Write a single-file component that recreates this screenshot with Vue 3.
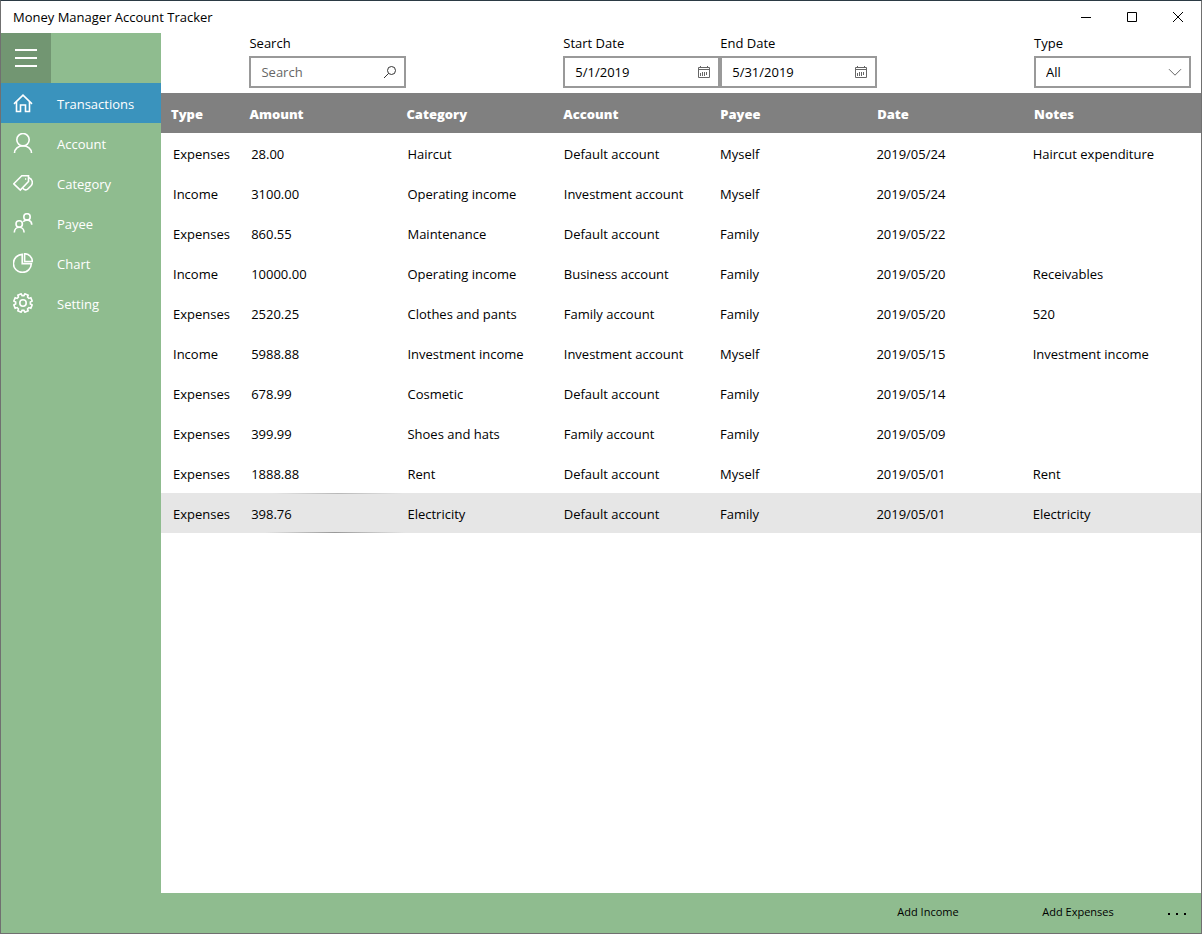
<script setup>
import { ref } from 'vue'

const navItems = [
  { id: 'transactions', label: 'Transactions' },
  { id: 'account', label: 'Account' },
  { id: 'category', label: 'Category' },
  { id: 'payee', label: 'Payee' },
  { id: 'chart', label: 'Chart' },
  { id: 'setting', label: 'Setting' }
]

const gearTeeth = 8
const gearPath = (() => {
  const points = []
  const step = (Math.PI * 2) / gearTeeth
  const profile = [
    [-0.34, 7.4],
    [-0.24, 9.4],
    [0.24, 9.4],
    [0.34, 7.4]
  ]
  for (let i = 0; i < gearTeeth; i++) {
    for (const [offset, radius] of profile) {
      const angle = i * step + step / 2 + offset * step
      points.push(`${(10 + radius * Math.cos(angle)).toFixed(2)} ${(10 + radius * Math.sin(angle)).toFixed(2)}`)
    }
  }
  return `M${points.join('L')}Z`
})()

const icons = {
  transactions: ['M1 10.8 10 2.2l9 8.600', 'M3.500 9v9.500h4V12h5v6.500h4V9'],
  account: ['M10 .5a6.200 6.200 0 1 1 0 12.400A6.200 6.200 0 0 1 10 .5Z', 'M1.500 20a8.500 7.200 0 0 1 17 0'],
  category: [
    'M.8 10.800 8.800 2.700h6.700v5.800l-8.200 8.500Z',
    'M12 6h1.200',
    'M15.500 4.600c2.500 1 4 3 3.800 5.400-.1 1.200-.6 2-1.500 3l-3 3c-1.200 1.200-3.400 1.400-5-.9'
  ],
  payee: [
    'M6.200 7.800a3.200 3.200 0 1 1 0 6.400 3.200 3.200 0 0 1 0-6.400Z',
    'M1.300 19.500c.2-7 9.600-7 9.800 0',
    'M14 .7a3.200 3.200 0 1 1 0 6.400 3.200 3.200 0 0 1 0-6.400Z',
    'M10.200 8.800c3-3.200 8.400-1.600 8.600 2.900'
  ],
  chart: ['M9.200 1.400a9 9 0 1 0 9.200 9.200H9.200Z', 'M11.600.7V8.500h7.700A7.700 7.800 0 0 0 11.600.7Z'],
  setting: [gearPath, 'M10 6.800a3.200 3.200 0 1 1 0 6.400 3.200 3.200 0 0 1 0-6.400Z']
}

const columns = ['Type', 'Amount', 'Category', 'Account', 'Payee', 'Date', 'Notes']

const rows = [
  ['Expenses', '28.00', 'Haircut', 'Default account', 'Myself', '2019/05/24', 'Haircut expenditure'],
  ['Income', '3100.00', 'Operating income', 'Investment account', 'Myself', '2019/05/24', ''],
  ['Expenses', '860.55', 'Maintenance', 'Default account', 'Family', '2019/05/22', ''],
  ['Income', '10000.00', 'Operating income', 'Business account', 'Family', '2019/05/20', 'Receivables'],
  ['Expenses', '2520.25', 'Clothes and pants', 'Family account', 'Family', '2019/05/20', '520'],
  ['Income', '5988.88', 'Investment income', 'Investment account', 'Myself', '2019/05/15', 'Investment income'],
  ['Expenses', '678.99', 'Cosmetic', 'Default account', 'Family', '2019/05/14', ''],
  ['Expenses', '399.99', 'Shoes and hats', 'Family account', 'Family', '2019/05/09', ''],
  ['Expenses', '1888.88', 'Rent', 'Default account', 'Myself', '2019/05/01', 'Rent'],
  ['Expenses', '398.76', 'Electricity', 'Default account', 'Family', '2019/05/01', 'Electricity']
]

const activeNav = ref('transactions')
const highlighted = ref(9)
const search = ref('')
const startDate = ref('5/1/2019')
const endDate = ref('5/31/2019')
const type = ref('All')
</script>

<template>
  <div class="window">
    <header class="titlebar">
      <span class="title">Money Manager Account Tracker</span>
      <div class="controls">
        <button type="button" aria-label="Minimize">
          <svg viewBox="0 0 12 12"><path d="M1 6.500h10" /></svg>
        </button>
        <button type="button" aria-label="Maximize">
          <svg viewBox="0 0 12 12"><path d="M1.500 1.500h9v9h-9Z" /></svg>
        </button>
        <button type="button" aria-label="Close">
          <svg viewBox="0 0 12 12"><path d="m1 1 10 10M11 1 1 11" /></svg>
        </button>
      </div>
    </header>

    <div class="body">
      <aside class="sidebar">
        <button type="button" class="hamburger" aria-label="Toggle menu">
          <span></span><span></span><span></span>
        </button>
        <nav>
          <a
            v-for="item in navItems"
            :key="item.id"
            href="#"
            class="nav-item"
            :class="{ active: activeNav === item.id }"
            @click.prevent="activeNav = item.id"
          >
            <svg class="nav-icon" viewBox="0 0 20 20">
              <path v-for="d in icons[item.id]" :key="d" :d="d" />
            </svg>
            <span class="nav-label">{{ item.label }}</span>
          </a>
        </nav>
      </aside>

      <main class="content">
        <form class="filters" @submit.prevent>
          <div class="field search">
            <label for="search">Search</label>
            <div class="box">
              <input id="search" v-model="search" type="text" placeholder="Search" />
              <button type="submit" aria-label="Run search">
                <svg class="glyph dark" viewBox="0 0 14 14"><circle cx="8.500" cy="5.500" r="4" /><path d="M5.600 8.400 1 13" /></svg>
              </button>
            </div>
          </div>
          <div class="field start">
            <label for="start">Start Date</label>
            <div class="box">
              <input id="start" v-model="startDate" type="text" />
              <button type="button" aria-label="Pick start date">
                <svg class="glyph" viewBox="0 0 14 14"><path d="M1.500 2.500h11v10h-11ZM1.500 4.500h11M3.500 1v2M10.500 1v2" /><path class="dots" d="M5 7.500h6M3 8.500h8M3 9.500h8M3 10.500h6" /></svg>
              </button>
            </div>
          </div>
          <div class="field end">
            <label for="end">End Date</label>
            <div class="box">
              <input id="end" v-model="endDate" type="text" />
              <button type="button" aria-label="Pick end date">
                <svg class="glyph" viewBox="0 0 14 14"><path d="M1.500 2.500h11v10h-11ZM1.500 4.500h11M3.500 1v2M10.500 1v2" /><path class="dots" d="M5 7.500h6M3 8.500h8M3 9.500h8M3 10.500h6" /></svg>
              </button>
            </div>
          </div>
          <div class="field type">
            <label for="type">Type</label>
            <div class="box">
              <select id="type" v-model="type">
                <option>All</option>
                <option>Income</option>
                <option>Expenses</option>
              </select>
              <svg class="glyph chevron" viewBox="0 0 14 14"><path d="m1 4.200 6 6 6-6" /></svg>
            </div>
          </div>
        </form>

        <table>
          <thead>
            <tr>
              <th v-for="column in columns" :key="column" scope="col">{{ column }}</th>
            </tr>
          </thead>
          <tbody>
            <tr v-for="(row, r) in rows" :key="r" :class="{ hover: r === highlighted }">
              <td v-for="(cell, c) in row" :key="c">{{ cell }}</td>
            </tr>
          </tbody>
        </table>
      </main>
    </div>

    <footer class="commands">
      <button type="button" class="command">Add Income</button>
      <button type="button" class="command">Add Expenses</button>
      <button type="button" class="more" aria-label="More"><i></i><i></i><i></i></button>
    </footer>
  </div>
</template>

<style>
body {
  margin: 0;
}
</style>

<style scoped>
.window {
  box-sizing: border-box;
  min-height: 100vh;
  display: flex;
  flex-direction: column;
  border: 1px solid #707070;
  border-top-color: #2b3a44;
  background: #fff;
  color: #000;
  font-family: "Open Sans", "Noto Sans", sans-serif;
  font-size: 13px;
  line-height: 20px;
}

button,
input,
select {
  margin: 0;
  padding: 0;
  border: 0;
  background: none;
  color: inherit;
  font: inherit;
  outline: none;
}

svg {
  fill: none;
  stroke: currentColor;
}

.titlebar {
  height: 32px;
  display: flex;
  align-items: center;
  justify-content: space-between;
}

.title {
  padding-left: 12px;
}

.controls {
  display: flex;
}

.controls button {
  width: 46px;
  height: 32px;
  display: grid;
  place-items: center;
}

.controls svg {
  width: 12px;
  height: 12px;
}

.body {
  flex: 1;
  display: flex;
}

.sidebar {
  width: 160px;
  flex: none;
  background: #8fbc8f;
  color: #fff;
}

.hamburger {
  width: 50px;
  height: 50px;
  display: flex;
  flex-direction: column;
  align-items: center;
  justify-content: center;
  gap: 6px;
  background: #729672;
}

.hamburger span {
  width: 22px;
  height: 2px;
  background: #fff;
}

.nav-item {
  height: 40px;
  display: flex;
  align-items: center;
  gap: 24px;
  padding-left: 12px;
  color: #fff;
  text-decoration: none;
}

.nav-item.active {
  background: #3a93bd;
}

.nav-label {
  padding-top: 2px;
}

.nav-icon {
  width: 20px;
  height: 20px;
  stroke-width: 1.6;
}

.content {
  flex: 1;
  min-width: 0;
}

.filters {
  height: 60px;
  box-sizing: border-box;
  display: grid;
  grid-template-columns: 1fr repeat(6, 2fr);
  padding: 0 10px;
}

.field {
  min-width: 0;
  display: flex;
  flex-direction: column;
  gap: 3px;
}

.search {
  grid-column: 2;
}

.start {
  grid-column: 4;
}

.end {
  grid-column: 5;
}

.type {
  grid-column: 7;
}

.box {
  box-sizing: border-box;
  position: relative;
  height: 32px;
  display: flex;
  align-items: center;
  border: 2px solid #999;
  background: #fff;
}

.box input,
.box select {
  flex: 1;
  width: 100%;
  min-width: 0;
  height: 28px;
  padding-left: 10px;
  appearance: none;
}

.box input::placeholder {
  color: #666;
  opacity: 1;
}

.box button {
  width: 28px;
  height: 28px;
  flex: none;
  display: grid;
  place-items: center;
}

.glyph {
  width: 14px;
  height: 14px;
  color: #666;
}

.glyph.dark {
  color: #333;
}

.dots {
  stroke-dasharray: 1 1;
}

.chevron {
  position: absolute;
  right: 7px;
  pointer-events: none;
}

table,
thead,
tbody {
  display: block;
}

tr {
  height: 40px;
  display: grid;
  grid-template-columns: 1fr repeat(6, 2fr);
  align-items: center;
}

thead tr {
  padding: 0 10px;
  background: #808080;
  color: #fff;
}

tbody tr {
  padding: 0 12px;
}

tbody tr.hover {
  background:
    linear-gradient(90deg, #e6e6e6, #b8b8b8, #e6e6e6) 112px 0 / 130px 1px no-repeat,
    linear-gradient(90deg, #e6e6e6, #999, #e6e6e6) 104px 100% / 140px 1px no-repeat,
    #e6e6e6;
}

th,
td {
  min-width: 0;
  padding: 2px 0 0;
  text-align: left;
  white-space: nowrap;
}

th {
  font-weight: 800;
}

.commands {
  height: 40px;
  display: flex;
  justify-content: flex-end;
  background: #8fbc8f;
}

.command {
  width: 150px;
  padding-bottom: 2px;
  font-size: 11px;
}

.more {
  width: 48px;
  display: flex;
  align-items: center;
  justify-content: center;
  gap: 6px;
  padding-top: 2px;
}

.more i {
  width: 2px;
  height: 2px;
  background: #000;
}
</style>
